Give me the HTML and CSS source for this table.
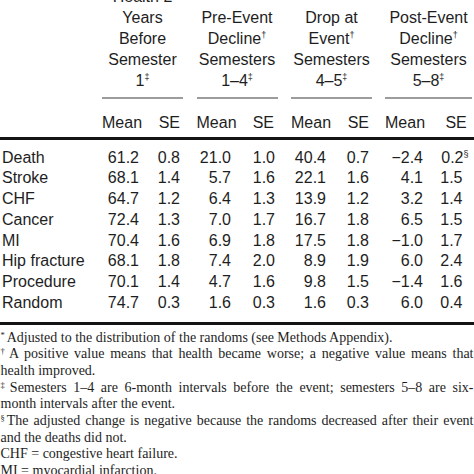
FILE: index.html
```html
<!DOCTYPE html>
<html>
<head>
<meta charset="utf-8">
<link rel="stylesheet" href="styles.css">
</head>
<body>
<div class="page">
<table class="data">
<colgroup>
<col class="c-label"><col class="c-m1"><col class="c-s1"><col class="c-gap">
<col class="c-m2"><col class="c-s2"><col class="c-gap">
<col class="c-m3"><col class="c-s3"><col class="c-gap3">
<col class="c-m4"><col class="c-s4"><col class="c-tail">
</colgroup>
<thead>
<tr class="titles">
<th></th>
<th colspan="2" class="grp">Health 2<br>Years<br>Before<br>Semester<br>1<sup>‡</sup></th>
<th></th>
<th colspan="2" class="grp">Pre-Event<br>Decline<sup>†</sup><br>Semesters<br>1–4<sup>‡</sup></th>
<th></th>
<th colspan="2" class="grp">Drop at<br>Event<sup>†</sup><br>Semesters<br>4–5<sup>‡</sup></th>
<th></th>
<th colspan="2" class="grp">Post-Event<br>Decline<sup>†</sup><br>Semesters<br>5–8<sup>‡</sup></th>
<th></th>
</tr>
<tr class="sub">
<th></th><th class="mean">Mean</th><th class="se">SE</th><th></th>
<th class="mean">Mean</th><th class="se">SE</th><th></th>
<th class="mean">Mean</th><th class="se">SE</th><th></th>
<th class="mean">Mean</th><th class="se">SE</th><th></th>
</tr>
</thead>
<tbody>
<tr><td>Death</td><td>61.2</td><td>0.8</td><td></td><td>21.0</td><td>1.0</td><td></td><td>40.4</td><td>0.7</td><td></td><td>−2.4</td><td>0.2<sup class="hang">§</sup></td><td></td></tr>
<tr><td>Stroke</td><td>68.1</td><td>1.4</td><td></td><td>5.7</td><td>1.6</td><td></td><td>22.1</td><td>1.6</td><td></td><td>4.1</td><td>1.5</td><td></td></tr>
<tr><td>CHF</td><td>64.7</td><td>1.2</td><td></td><td>6.4</td><td>1.3</td><td></td><td>13.9</td><td>1.2</td><td></td><td>3.2</td><td>1.4</td><td></td></tr>
<tr><td>Cancer</td><td>72.4</td><td>1.3</td><td></td><td>7.0</td><td>1.7</td><td></td><td>16.7</td><td>1.8</td><td></td><td>6.5</td><td>1.5</td><td></td></tr>
<tr><td>MI</td><td>70.4</td><td>1.6</td><td></td><td>6.9</td><td>1.8</td><td></td><td>17.5</td><td>1.8</td><td></td><td>−1.0</td><td>1.7</td><td></td></tr>
<tr><td>Hip fracture</td><td>68.1</td><td>1.8</td><td></td><td>7.4</td><td>2.0</td><td></td><td>8.9</td><td>1.9</td><td></td><td>6.0</td><td>2.4</td><td></td></tr>
<tr><td>Procedure</td><td>70.1</td><td>1.4</td><td></td><td>4.7</td><td>1.6</td><td></td><td>9.8</td><td>1.5</td><td></td><td>−1.4</td><td>1.6</td><td></td></tr>
<tr><td>Random</td><td>74.7</td><td>0.3</td><td></td><td>1.6</td><td>0.3</td><td></td><td>1.6</td><td>0.3</td><td></td><td>6.0</td><td>0.4</td><td></td></tr>
</tbody>
</table>
<div class="notes">
<p class="note"><sup>*</sup>Adjusted to the distribution of the randoms (see Methods Appendix).</p>
<p class="note"><span class="full"><sup>†</sup>A positive value means that health became worse; a negative value means that</span><span class="rest">health improved.</span></p>
<p class="note"><span class="full"><sup>‡</sup>Semesters 1–4 are 6-month intervals before the event; semesters 5–8 are six-</span><span class="rest">month intervals after the event.</span></p>
<p class="note"><span class="full"><sup>§</sup>The adjusted change is negative because the randoms decreased after their event</span><span class="rest">and the deaths did not.</span></p>
<p class="note">CHF = congestive heart failure.</p>
<p class="note">MI = myocardial infarction.</p>
</div>
</div>
</body>
</html>
```

FILE: styles.css
```css
html, body {
  margin: 0;
  padding: 0;
  background: #ffffff;
  overflow: hidden;
}

.page {
  width: 474px;
  color: #1e1e1e;
}

.data {
  margin-top: -14.5px;
  width: 474px;
  table-layout: fixed;
  border-collapse: separate;
  border-spacing: 0;
  font-family: "Liberation Sans", Arial, sans-serif;
  font-size: 16px;
}

.c-label { width: 102px; }
.c-m1 { width: 41px; }
.c-s1 { width: 40px; }
.c-gap { width: 13.5px; }
.c-m2 { width: 41.5px; }
.c-s2 { width: 39.5px; }
.c-m3 { width: 41px; }
.c-s3 { width: 40px; }
.c-gap3 { width: 13px; }
.c-m4 { width: 42px; }
.c-s4 { width: 45px; }
.c-tail { width: 2px; }

.data th,
.data td {
  padding: 0;
  font-weight: normal;
  white-space: nowrap;
}

.titles th {
  vertical-align: bottom;
  line-height: 21px;
  padding-bottom: 6.5px;
}

.titles th.grp {
  text-align: center;
  border-bottom: 2px solid #9c9c9c;
}

.sub th {
  line-height: 21px;
  padding-top: 12.5px;
  padding-bottom: 4px;
  border-bottom: 3px solid #141414;
}

.sub th.mean { text-align: left; }
.sub th.se { text-align: right; }
.sub th:nth-child(3) { padding-right: 3px; }
.sub th:nth-child(6) { padding-right: 3.5px; }
.sub th:nth-child(9) { padding-right: 3px; }
.sub th:nth-child(12) { padding-right: 5.3px; }

.data sup {
  font-size: 9px;
  line-height: 0;
  vertical-align: 6px;
}

.data tbody td {
  line-height: 20.75px;
  text-align: right;
}

.data tbody td:first-child {
  text-align: left;
  padding-left: 2px;
}

.data tbody tr:first-child td { padding-top: 8px; }
.data tbody tr:last-child td {
  padding-bottom: 8.5px;
  border-bottom: 3px solid #141414;
}

.data tbody td:nth-child(2) { padding-right: 4px; }
.data tbody td:nth-child(3) { padding-right: 3px; }
.data tbody td:nth-child(5) { padding-right: 7px; }
.data tbody td:nth-child(6) { padding-right: 2.5px; }
.data tbody td:nth-child(8) { padding-right: 6px; }
.data tbody td:nth-child(9) { padding-right: 3px; }
.data tbody td:nth-child(11) { padding-right: 4px; }
.data tbody td:nth-child(12) { padding-right: 9.5px; }

.hang {
  margin-right: -6px;
}

.notes {
  margin-top: 4.5px;
  padding-left: 0.5px;
  width: 473px;
  font-family: "Liberation Serif", "Times New Roman", serif;
  font-size: 14px;
  line-height: 16.7px;
  color: #1e1e1e;
}

.note {
  margin: 0;
}

.note sup {
  font-size: 8.5px;
  line-height: 0;
  vertical-align: 4px;
  margin-right: 2px;
}

.full {
  display: block;
  text-align: justify;
  text-align-last: justify;
}

.rest {
  display: block;
}
```
